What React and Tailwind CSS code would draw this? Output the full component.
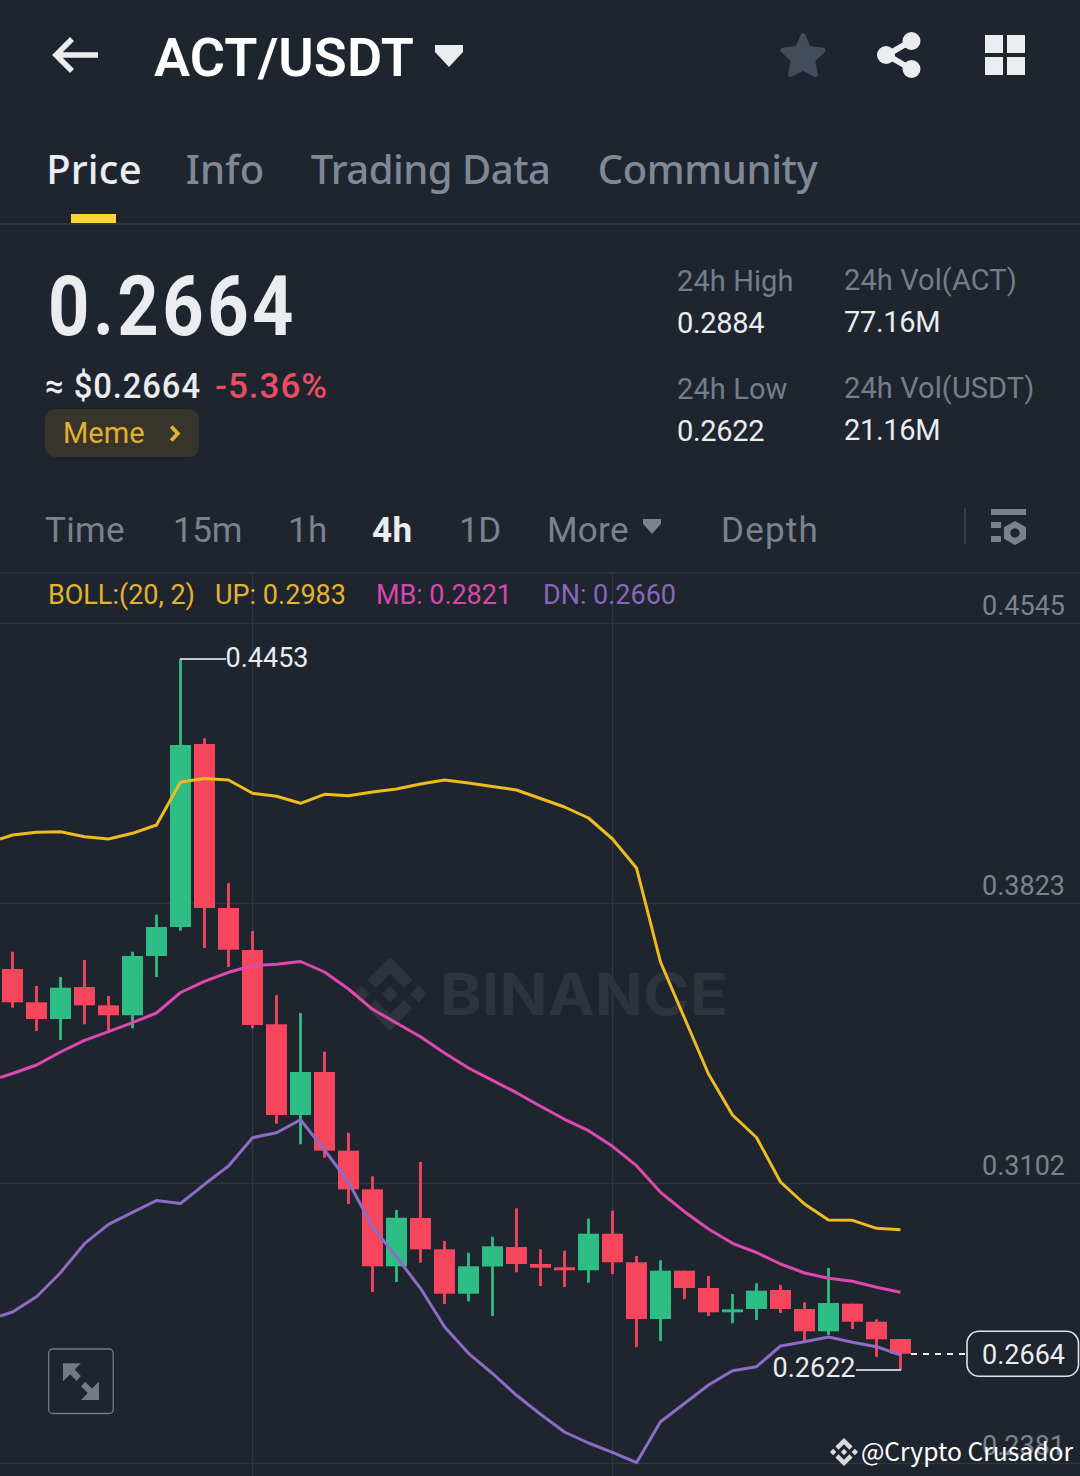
// src/components/MarketDetail.jsx
import React, { useState } from 'react';
import { SiBinance } from 'react-icons/si';

const UP = '#2ebd85';
const DOWN = '#f6465d';

// first candle centre and distance between candles
const START_X = 12.5;
const STEP = 24;

// [direction, high, body top, body bottom, low] in chart units
const candles = [
  ['d', 951.7, 969, 1002.3, 1007.7],
  ['d', 986, 1002.3, 1019, 1031],
  ['u', 977, 987.7, 1019, 1040],
  ['d', 960, 987, 1005.3, 1024.3],
  ['d', 996, 1005.3, 1015.3, 1030.7],
  ['u', 951.7, 956, 1015.3, 1028.3],
  ['u', 914.7, 927, 956, 977],
  ['u', 659, 745, 927, 930.7],
  ['d', 738.3, 744, 908, 948],
  ['d', 883, 908, 949.7, 967],
  ['d', 931, 950, 1025, 1028.3],
  ['d', 995, 1024.3, 1115, 1123.7],
  ['u', 1013, 1072, 1115, 1144.3],
  ['d', 1051.7, 1072, 1150.7, 1157.7],
  ['d', 1132.7, 1150.7, 1189.3, 1204],
  ['d', 1176.3, 1189.3, 1266.3, 1292],
  ['u', 1210, 1217.7, 1266.3, 1282],
  ['d', 1162, 1218, 1249.3, 1262.7],
  ['d', 1241, 1249.3, 1293.7, 1304],
  ['u', 1252.7, 1266.3, 1293.7, 1301.3],
  ['u', 1236.7, 1246.3, 1266.5, 1316],
  ['d', 1208.3, 1247, 1264, 1272.3],
  ['d', 1249.3, 1264, 1267.7, 1286],
  ['d', 1250.7, 1267.3, 1270.3, 1287],
  ['u', 1218.7, 1233.7, 1270.3, 1282.7],
  ['d', 1210.7, 1233.7, 1262.3, 1274],
  ['d', 1256, 1262.3, 1319, 1347],
  ['u', 1260.3, 1270.7, 1319, 1341],
  ['d', 1270.7, 1270.7, 1288, 1299],
  ['d', 1276, 1288, 1312.3, 1316],
  ['u', 1294, 1309.3, 1312.3, 1323.3],
  ['u', 1283.3, 1290.7, 1309, 1320],
  ['d', 1285, 1290, 1309, 1313],
  ['d', 1302.3, 1309, 1331.3, 1341.3],
  ['u', 1268, 1303, 1331.3, 1335],
  ['d', 1303.7, 1303.7, 1321.7, 1329],
  ['d', 1319.3, 1321.7, 1339.3, 1357],
  ['d', 1339, 1339, 1353.7, 1370],
];

// Bollinger bands, the first value sits on the left edge
const bands = [
  {
    color: '#eebb20',
    points: [839, 835, 832.2, 831.8, 836.7, 839, 833.3, 825, 782, 778.5, 780, 793.3, 796.2, 803.3, 794.3, 795.8, 792, 789, 784, 780, 783, 786.5, 790, 798.5, 807, 818, 839, 868, 962, 1018, 1074, 1115, 1137.5, 1182, 1204, 1220, 1220.3, 1228.3, 1229.7],
  },
  {
    color: '#dd49b0',
    points: [1077.5, 1073.5, 1065, 1052, 1040.3, 1031.7, 1022.7, 1013, 992.5, 981.3, 972.3, 965.7, 964.3, 961.5, 972, 989, 1009.3, 1023, 1036.7, 1053, 1068, 1080.3, 1092.7, 1106.3, 1119.3, 1130.7, 1146.3, 1165.7, 1192.3, 1211.7, 1229, 1243.3, 1252.5, 1264, 1273, 1278.3, 1281.3, 1287.3, 1292.3],
  },
  {
    color: '#8c6cc4',
    points: [1316, 1312, 1296.7, 1272.7, 1243.7, 1224.3, 1212.3, 1200.5, 1203.5, 1184.3, 1166, 1137.7, 1132.7, 1119.7, 1150, 1182, 1226.7, 1257, 1288.3, 1326.7, 1353.3, 1373.5, 1395.3, 1414.3, 1432, 1443, 1452.3, 1462.7, 1421.7, 1403.5, 1385, 1370.7, 1366.7, 1346, 1341.7, 1337, 1342.3, 1346.7, 1355],
  },
];

const axis = [
  { label: '0.4545', line: 623.5 },
  { label: '0.3823', line: 903.5 },
  { label: '0.3102', line: 1183.5 },
  { label: '0.2381', line: 1463.5 },
];

const tabs = [
  { name: 'Price', box: 'w-[94px]', text: 'tracking-[0.2px]' },
  { name: 'Info', box: 'w-[76px]', text: 'tracking-[0.2px]' },
  { name: 'Trading Data', box: 'w-[243px]', text: 'tracking-[-0.5px]' },
  { name: 'Community', box: 'w-[219px]', text: 'tracking-[-0.4px]' },
];

const stats = [
  [
    { label: '24h High', value: '0.2884' },
    { label: '24h Low', value: '0.2622' },
  ],
  [
    { label: '24h Vol(ACT)', value: '77.16M' },
    { label: '24h Vol(USDT)', value: '21.16M' },
  ],
];

const bandPath = (points) =>
  points.map((y, i) => `${i === 0 ? 0 : START_X + (i - 1) * STEP},${y}`).join(' ');

function Caret({ className }) {
  return (
    <svg viewBox="0 0 28 22" preserveAspectRatio="none" className={className} fill="currentColor">
      <path d="M0 0H28V7L14 22L0 7Z" />
    </svg>
  );
}

function Header() {
  return (
    <header className="flex h-[116px] items-center pl-[52px] pr-[55px] text-[#eaecef]">
      <svg viewBox="0 0 46 36" className="mb-[6px] h-[36px] w-[46px] shrink-0" fill="none" stroke="currentColor" strokeWidth="5.6">
        <path d="M4 18H46M20 2L4 18L20 34" />
      </svg>
      <h1 className="ml-[56px] w-[258px] whitespace-nowrap font-[Roboto] text-[54px] font-semibold leading-none tracking-[0.1px] text-white">
        ACT/USDT
      </h1>
      <Caret className="mb-[4px] ml-[23px] h-[22px] w-[28px]" />

      <div className="mb-[6px] ml-auto flex items-center">
        <svg viewBox="0 0 46 46" className="h-[46px] w-[46px] text-[#434c5a]" fill="currentColor" stroke="currentColor" strokeWidth="5" strokeLinejoin="round">
          <path d="M23 3.5L28.3 16.3L43 18.3L32.6 27.8L35.4 42.5L23 36L10.6 42.5L13.4 27.8L3 18.3L17.7 16.3Z" />
        </svg>
        <svg viewBox="0 0 44 46" className="ml-[51px] h-[46px] w-[44px]" fill="currentColor">
          <path d="M34 9L10 23L34 37" fill="none" stroke="currentColor" strokeWidth="6" />
          <circle cx="34.5" cy="9" r="9" />
          <circle cx="9" cy="23" r="9" />
          <circle cx="34.5" cy="37" r="9" />
        </svg>
        <div className="ml-[64px] grid w-[40px] grid-cols-2 gap-[4px]">
          <i className="h-[18px] bg-current" />
          <i className="h-[18px] bg-current" />
          <i className="h-[18px] bg-current" />
          <i className="h-[18px] bg-current" />
        </div>
      </div>
    </header>
  );
}

function Tabs({ active, onChange }) {
  return (
    <nav className="flex h-[109px] gap-[46px] border-b-2 border-[#2e363f] pl-[47px] pt-[23px]">
      {tabs.map((tab) => (
        <button key={tab.name} onClick={() => onChange(tab.name)} className={`flex shrink-0 flex-col items-center ${tab.box}`}>
          <span className={`whitespace-nowrap font-["Noto_Sans"] text-[40px] font-medium leading-[60px] ${tab.text} ${active === tab.name ? 'text-[#eaecef]' : 'text-[#7f8896]'}`}>
            {tab.name}
          </span>
          {active === tab.name && <span className="mr-[2px] mt-[15px] h-[9px] w-[45px] bg-[#fcd535]" />}
        </button>
      ))}
    </nav>
  );
}

function Summary() {
  return (
    <section className="flex h-[263px] font-[Roboto]">
      <div className="w-[633px] pl-[45px] pt-[42px]">
        <div className="ml-[3px] origin-left scale-x-[0.87] whitespace-nowrap text-[83px] font-bold leading-[80px] tracking-[4px] text-[#eaecef]">
          0.2664
        </div>
        <div className="mt-[18px] flex whitespace-nowrap text-[35px] font-medium leading-[44px] tracking-[1px]">
          <span className="w-[170px] origin-left scale-x-[0.935] text-[#eaecef]">≈ $0.2664</span>
          <span className="text-[#e84d62]">-5.36%</span>
        </div>
        <div className="flex h-[48px] w-[154px] items-center rounded-[10px] bg-[#37342b] pl-[18px] text-[29px] text-[#e0b030]">
          <span className="w-[84px] whitespace-nowrap leading-[48px]">Meme</span>
          <svg viewBox="0 0 12 18" className="ml-[22px] h-[17px] w-[12px]" fill="none" stroke="currentColor" strokeWidth="4">
            <path d="M2 1.5L9 9L2 16.5" />
          </svg>
        </div>
      </div>

      <div className="flex pl-[44px] pt-[35px]">
        {stats.map((column, i) => (
          <div key={i} className={`flex flex-col gap-6 whitespace-nowrap text-[29px] leading-[42px] ${i === 0 ? 'w-[167px]' : '-mt-px'}`}>
            {column.map((item) => (
              <div key={item.label}>
                <p className="tracking-[0.1px] text-[#757d8a]">{item.label}</p>
                <p className="tracking-[-0.3px] text-[#eaecef]">{item.value}</p>
              </div>
            ))}
          </div>
        ))}
      </div>
    </section>
  );
}

function Intervals() {
  return (
    <div className="flex h-[86px] items-center whitespace-nowrap border-b-2 border-[#2b323d] pl-[45px] pt-[2px] font-[Roboto] text-[35px] tracking-[0.3px] text-[#7a828f]">
      <span className="w-[128px]">Time</span>
      <span className="w-[115px] tracking-[-0.3px]">15m</span>
      <span className="w-[84px]">1h</span>
      <span className="w-[87px] font-bold text-[#eaecef]">4h</span>
      <span className="w-[88px] tracking-[-0.5px]">1D</span>
      <span className="w-[96px]">More</span>
      <Caret className="mb-[10px] h-[15px] w-[18px]" />
      <span className="ml-[60px] w-[243px] tracking-[1.2px]">Depth</span>
      <i className="mb-[10px] h-[36px] w-[2px] bg-[#363e49]" />
      <svg viewBox="0 0 36 36" className="mb-[8px] ml-[25px] h-[36px] w-[36px]" fill="currentColor">
        <path d="M0 0H35V6H0ZM0 13H10V19H0ZM0 27H10V33H0Z" />
        <path fillRule="evenodd" d="M24 12L35 18.3V29.7L24 36L13 29.7V18.3ZM24 19.3A4.7 4.7 0 1 0 24 28.7A4.7 4.7 0 1 0 24 19.3Z" />
      </svg>
    </div>
  );
}

function Chart() {
  return (
    <svg viewBox="0 574 1080 902" className="block h-[902px] w-full font-[Roboto] text-[27px]">
      {/* Grid */}
      <g stroke="#2f3741" strokeWidth="1.5">
        {axis.map((a) => (
          <path key={a.line} d={`M0 ${a.line}H1080`} />
        ))}
        <path d="M252.5 574V1476M612.5 574V1476" />
      </g>

      {/* Watermark */}
      <SiBinance x="353" y="957" size={74} color="#2e333e" />
      <text x="440" y="1015" textLength="288" lengthAdjust="spacingAndGlyphs" fill="#2e333e" className='font-["Inter"] text-[58px] font-bold'>
        BINANCE
      </text>

      {/* Indicator legend */}
      <text x="48" y="604" textLength="147" fill="#e3b32c">BOLL:(20, 2)</text>
      <text x="215" y="604" textLength="131" fill="#e3b32c">UP: 0.2983</text>
      <text x="376" y="604" textLength="136" fill="#d549ab">MB: 0.2821</text>
      <text x="543" y="604" textLength="133" fill="#8768bd">DN: 0.2660</text>

      {/* Candles */}
      {candles.map(([dir, high, top, bottom, low], i) => {
        const x = START_X + i * STEP;
        const color = dir === 'u' ? UP : DOWN;
        return (
          <g key={i} fill={color}>
            <rect x={x - 1.4} y={high} width="2.8" height={low - high} />
            <rect x={x - 10.5} y={top} width="21" height={bottom - top} />
          </g>
        );
      })}

      {bands.map((band) => (
        <polyline key={band.color} points={bandPath(band.points)} fill="none" stroke={band.color} strokeWidth="3" strokeLinejoin="round" />
      ))}

      {/* High / low markers */}
      <path d="M180 659H226M856 1370H901" stroke="#c3c7ce" strokeWidth="2" />
      <text x="225.5" y="666.5" textLength="83" fill="#eaecef">0.4453</text>
      <text x="772.5" y="1376.5" textLength="83" fill="#eaecef">0.2622</text>

      {axis.map((a) => (
        <text key={a.label} x="982" y={a.line - 8.7} textLength="83" fill="#7a828e">{a.label}</text>
      ))}

      {/* Last price */}
      <path d="M911 1354H966" stroke="#eaecef" strokeWidth="2" strokeDasharray="6 6" />
      <rect x="967" y="1331.3" width="111.5" height="45" rx="12" fill="#1f252f" stroke="#dfe2e6" strokeWidth="1.6" />
      <text x="982" y="1363.5" textLength="83" fill="#eaecef">0.2664</text>

      {/* Full screen button */}
      <rect x="48.7" y="1349" width="64.5" height="64.5" rx="4" fill="none" stroke="#717a89" strokeWidth="1.3" />
      <g fill="#717a89">
        <path d="M63 1363.3H81L74.8 1369.5L80.8 1376L76.6 1381L70.2 1374.2L63 1381.3Z" />
        <path d="M99 1400H81L87.8 1393L81 1386.4L85.2 1381.8L92 1388.4L99 1381.6Z" />
      </g>

      {/* Author */}
      <SiBinance x="830" y="1438" size={28} color="#d9dadb" />
      <text x="861" y="1460.7" textLength="212" lengthAdjust="spacingAndGlyphs" fill="#ffffff" className='font-["Noto_Sans_CJK_SC",sans-serif] text-[25px]'>
        @Crypto Crusador
      </text>
    </svg>
  );
}

export default function App() {
  const [activeTab, setActiveTab] = useState('Price');

  return (
    <div className="w-[1080px] overflow-hidden bg-[#1f252f]">
      <Header />
      <Tabs active={activeTab} onChange={setActiveTab} />
      <Summary />
      <Intervals />
      <Chart />
    </div>
  );
}
